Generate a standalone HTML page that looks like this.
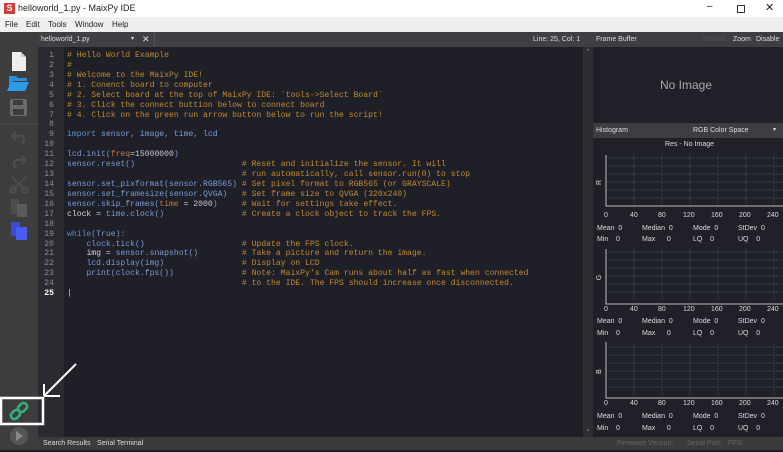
<!DOCTYPE html>
<html><head><meta charset="utf-8"><style>
*{margin:0;padding:0;box-sizing:border-box}
body{width:783px;height:450px;overflow:hidden;background:#1e1f27;font-family:"Liberation Sans",sans-serif;position:relative}
.a{position:absolute}
#title{left:0;top:0;width:783px;height:17px;background:#fff;font-size:9px;color:#222}
#menu{left:0;top:17px;width:783px;height:15px;background:#efefef;font-size:8px;color:#222}
#menu span{position:absolute;top:3px}
#tb{left:0;top:32px;width:38px;height:418px;background:#3d3d3e}
#tabs{left:38px;top:32px;width:555px;height:15px;background:#3f4043;font-size:7px;color:#ddd}
#gut{left:38px;top:47px;width:26px;height:390px;background:#2a2b30}
#ed{left:64px;top:47px;width:519px;height:390px;background:#1e1f27}
#sb{left:583px;top:47px;width:10px;height:390px;background:#2d2e33}
pre{font-family:"Liberation Mono",monospace;font-size:8.1px;line-height:9.92px;position:absolute}
#nums{left:38px;top:51px;width:16px;text-align:right;color:#8c8c95}
#code{left:67px;top:51px;color:#c9c9cf}
.c{color:#c48a2e}.n{color:#7c9ad6}.k{color:#5a8fc7}.p{color:#c77a3a}.w{color:#d8d8d8}
#rp{left:593px;top:32px;width:190px;height:405px;background:#1f2028}
.hdr{background:#3d3e41;font-size:7px;color:#ddd;height:15px;position:absolute}
#bot{left:38px;top:437px;width:745px;height:13px;background:#3a3b3d;font-size:7px;color:#ddd}
.st{font-size:7px;color:#ddd;position:absolute}
</style></head><body>
<div id="title" class="a">
 <div class="a" style="left:4px;top:3px;width:11px;height:11px;background:#d43b3b;color:#fff;font-size:9px;font-weight:bold;text-align:center;line-height:11px">S</div>
 <span class="a" style="left:18px;top:3px">helloworld_1.py - MaixPy IDE</span>
 <span class="a" style="left:707px;top:1px;font-size:10px">–</span>
 <div class="a" style="left:737px;top:5px;width:8px;height:8px;border:1px solid #333"></div>
 <span class="a" style="left:765px;top:1px;font-size:11px">✕</span>
</div>
<div id="menu" class="a"><span style="left:5px">File</span><span style="left:26px">Edit</span><span style="left:48px">Tools</span><span style="left:75px">Window</span><span style="left:112px">Help</span></div>
<div id="tb" class="a">
 <svg width="38" height="418" style="position:absolute;left:0;top:0">
  <path d="M12 20h9l5 5v14h-14z" fill="#eee"/><path d="M21 20v5h5" fill="#ccc"/>
  <path d="M9 44h7l2 2h9v3h-14l-4 10z" fill="#2a8fd9"/><path d="M11 50h18l-4 9h-18z" fill="#2a9be8"/>
  <rect x="10" y="67" width="17" height="17" rx="2" fill="#6a6a6a"/><rect x="13" y="68" width="10" height="5" fill="#3d3d3e"/><rect x="13" y="77" width="11" height="6" fill="#3d3d3e"/>
  <line x1="0" y1="92" x2="38" y2="92" stroke="#4a4a4c"/>
  <path d="M12 104l4-4M12 104l4 4M12 104h10a5 5 0 0 1 0 8" stroke="#4d4d4e" stroke-width="2.5" fill="none"/>
  <path d="M26 128l-4-4M26 128l-4 4M26 128h-10a5 5 0 0 0 0 8" stroke="#4d4d4e" stroke-width="2.5" fill="none"/>
  <path d="M12 145l14 14M26 145l-14 14" stroke="#4d4d4e" stroke-width="2"/><circle cx="13" cy="158" r="3" stroke="#4d4d4e" stroke-width="2" fill="none"/><circle cx="25" cy="158" r="3" stroke="#4d4d4e" stroke-width="2" fill="none"/>
  <rect x="11" y="167" width="8" height="15" fill="#4d4d4e"/><rect x="17" y="172" width="10" height="13" fill="#5a5a5a"/>
  <rect x="11" y="190" width="9" height="14" fill="#3b4bd8"/><rect x="16" y="195" width="11" height="13" fill="#4a5cf0"/>
  <g transform="rotate(-45 19 379)" fill="none" stroke="#2fb07a" stroke-width="2.6">
   <rect x="9" y="375.5" width="10" height="7" rx="3.5"/><rect x="19" y="375.5" width="10" height="7" rx="3.5"/>
  </g>
  <circle cx="19" cy="404" r="9" fill="#555"/><path d="M16 399v10l7-5z" fill="#888"/>
 </svg>
</div>
<div id="tabs" class="a"><span class="a" style="left:3px;top:4px">helloworld_1.py</span><span class="a" style="left:93px;top:3px;font-size:6px">▾</span><span class="a" style="left:104px;top:2px;font-size:9px">✕</span><div class="a" style="left:116px;top:0;width:1px;height:15px;background:#555"></div><span class="a" style="left:495px;top:4px">Line: 25, Col: 1</span></div>
<div id="gut" class="a"></div>
<div id="ed" class="a"></div>
<div id="sb" class="a"><span class="a" style="left:2px;top:1px;font-size:7px;color:#999">⌃</span><span class="a" style="left:2px;top:378px;font-size:7px;color:#999">⌄</span></div>
<pre id="nums">1
2
3
4
5
6
7
8
9
10
11
12
13
14
15
16
17
18
19
20
21
22
23
24
<b style="color:#fff">25</b></pre>
<pre id="code"><span class="c"># Hello World Example
#
# Welcome to the MaixPy IDE!
# 1. Conenct board to computer
# 2. Select board at the top of MaixPy IDE: `tools->Select Board`
# 3. Click the connect buttion below to connect board
# 4. Click on the green run arrow button below to run the script!</span>

<span class="k">import</span> <span class="n">sensor, image, time, lcd</span>

<span class="n">lcd.init(</span><span class="p">freq</span>=15000000<span class="n">)</span>
<span class="n">sensor.reset()</span>                      <span class="c"># Reset and initialize the sensor. It will
                                    # run automatically, call sensor.run(0) to stop</span>
<span class="n">sensor.set_pixformat(sensor.RGB565)</span> <span class="c"># Set pixel format to RGB565 (or GRAYSCALE)</span>
<span class="n">sensor.set_framesize(sensor.QVGA)</span>   <span class="c"># Set frame size to QVGA (320x240)</span>
<span class="n">sensor.skip_frames(</span><span class="p">time</span> = 2000<span class="n">)</span>     <span class="c"># Wait for settings take effect.</span>
<span class="w">clock</span> = <span class="n">time.clock()</span>                <span class="c"># Create a clock object to track the FPS.</span>

<span class="k">while</span><span class="n">(True):</span>
    <span class="n">clock.tick()</span>                    <span class="c"># Update the FPS clock.</span>
    <span class="w">img</span> = <span class="n">sensor.snapshot()</span>         <span class="c"># Take a picture and return the image.</span>
    <span class="n">lcd.display(img)</span>                <span class="c"># Display on LCD</span>
    <span class="n">print(clock.fps())</span>              <span class="c"># Note: MaixPy's Cam runs about half as fast when connected
                                    # to the IDE. The FPS should increase once disconnected.</span>
<span class="w">|</span></pre>
<div id="rp" class="a">
 <div class="hdr" style="left:0;top:0;width:190px"><span class="a" style="left:3px;top:4px">Frame Buffer</span><span class="a" style="left:110px;top:4px;color:#555">Record</span><span class="a" style="left:140px;top:4px">Zoom</span><span class="a" style="left:163px;top:4px">Disable</span></div>
 <div class="a" style="left:67px;top:46px;font-size:12px;color:#aaa">No Image</div>
 <div class="hdr" style="left:0;top:91px;width:190px"><span class="a" style="left:3px;top:4px">Histogram</span><span class="a" style="left:100px;top:4px">RGB Color Space</span><span class="a" style="left:180px;top:3px;font-size:6px">▾</span></div>
 <div class="st" style="left:72px;top:109px">Res - No Image</div>
 <svg width="190" height="300" style="position:absolute;left:0;top:120px">
  <g id="h" stroke="#4a4b55" stroke-dasharray="1 1">
   <path d="M13 6h177M13 14h177M13 22h177M13 30h177M13 38h177M13 46h177"/>
   <path d="M41 3v51M69 3v51M97 3v51M125 3v51M153 3v51M181 3v51"/>
  </g>
  <path d="M13 3v51h177" stroke="#bbb" fill="none"/>
  <use href="#h" y="94"/><path d="M13 97v55h177" stroke="#bbb" fill="none"/>
  <use href="#h" y="189"/><path d="M13 190v56h177" stroke="#bbb" fill="none"/>
 </svg>
 <div class="st" style="left:4px;top:147px;transform:rotate(-90deg)">R</div>
 <div class="st" style="left:4px;top:242px;transform:rotate(-90deg)">G</div>
 <div class="st" style="left:4px;top:336px;transform:rotate(-90deg)">B</div>
</div>
<div id="stats"></div>
<script>
var h='';[[212,225,236],[306,318,330],[400,413,425]].forEach(function(r){
[[11,'0'],[37,'40'],[65,'80'],[90,'120'],[118,'160'],[146,'200'],[174,'240']].forEach(function(l){h+='<div class="st" style="left:'+(593+l[0])+'px;top:'+r[0]+'px">'+l[1]+'</div>'});
[[4,'Mean&nbsp; 0'],[49,'Median&nbsp; 0'],[100,'Mode&nbsp; 0'],[145,'StDev&nbsp; 0']].forEach(function(s){h+='<div class="st" style="left:'+(593+s[0])+'px;top:'+r[1]+'px">'+s[1]+'</div>'});
[[4,'Min&nbsp;&nbsp;&nbsp; 0'],[49,'Max&nbsp;&nbsp;&nbsp;&nbsp;&nbsp; 0'],[100,'LQ&nbsp;&nbsp;&nbsp; 0'],[145,'UQ&nbsp;&nbsp;&nbsp; 0']].forEach(function(s){h+='<div class="st" style="left:'+(593+s[0])+'px;top:'+r[2]+'px">'+s[1]+'</div>'});
});document.getElementById('stats').innerHTML=h;
</script>
<div id="bot" class="a"><span class="a" style="left:5px;top:3px">Search Results</span><span class="a" style="left:59px;top:3px">Serial Terminal</span><span class="a" style="left:579px;top:3px;color:#666">Firmware Version:</span><span class="a" style="left:649px;top:3px;color:#666">Serial Port:</span><span class="a" style="left:690px;top:3px;color:#666">FPS:</span></div>
<svg width="783" height="450" style="position:absolute;left:0;top:0;pointer-events:none">
 <rect x="1" y="398" width="42" height="26" fill="none" stroke="#fff" stroke-width="2.5"/>
 <path d="M76 364L44 396M44 396v-12M44 396h16" stroke="#fff" stroke-width="2" fill="none"/>
</svg>
</body></html>
